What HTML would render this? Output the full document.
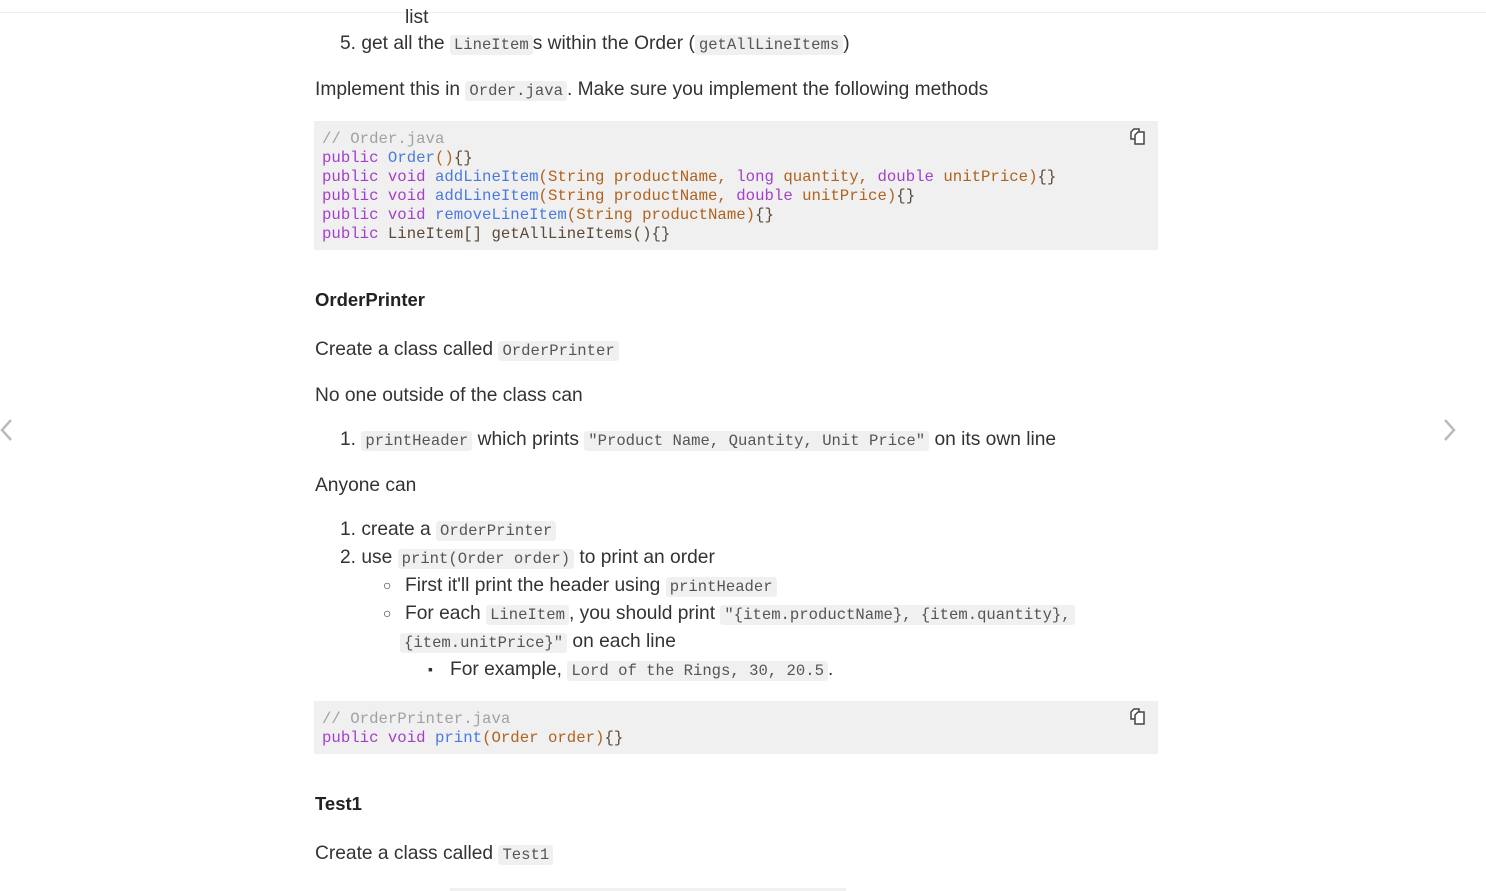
<!DOCTYPE html>
<html><head><meta charset="utf-8"><style>
body{margin:0;width:1486px;height:891px;overflow:hidden;background:#fff;position:relative;font-family:"Liberation Sans",sans-serif;color:#333;font-size:19.2px}
.l{position:absolute;line-height:24px;white-space:nowrap;margin-top:1px}
code{font-family:"Liberation Mono",monospace;font-size:15.6px;background:#f0f0f0;color:#555;padding:1px 4px;border-radius:3px}
.cb{position:absolute;left:314px;width:844px;background:#f0f0f0}
.cl{position:absolute;left:322px;font-family:"Liberation Mono",monospace;font-size:15.7px;line-height:19px;white-space:pre;color:#5c4a3a}
.o{color:#b0621f}
.k{color:#a43fc9}.f{color:#4a7ae0}.c{color:#a0a1a7}
h4{position:absolute;margin:0;font-size:18.5px;font-weight:bold;color:#222;line-height:24px}
.cp{position:absolute;left:1128px;width:18px;height:18px}
.b{position:absolute;font-size:14px}
</style></head><body>
<div style="position:absolute;left:0;top:12px;width:1486px;height:1px;background:#eee"></div>
<div class="l" style="left:405px;top:5px">list</div>
<div class="l" style="left:340px;top:31px">5. get all the <code>LineItem</code>s within the Order (<code>getAllLineItems</code>)</div>
<div class="l" style="left:315px;top:77px">Implement this in <code>Order.java</code>. Make sure you implement the following methods</div>
<div class="cb" style="top:121px;height:129px"></div>
<svg class="cp" style="top:128px" viewBox="0 0 18 18" fill="#fff" stroke="#444" stroke-width="1.5"><path d="M3 4l3-3h5v10H3z"/><path d="M7 7l3-3h6v12H7z"/></svg>
<div class="cl" style="top:130px"><span class="c">// Order.java</span>
<span class="k">public</span> <span class="f">Order</span><span class="o">()</span>{}
<span class="k">public void</span> <span class="f">addLineItem</span><span class="o">(String productName, </span><span class="k">long</span><span class="o"> quantity, </span><span class="k">double</span><span class="o"> unitPrice)</span>{}
<span class="k">public void</span> <span class="f">addLineItem</span><span class="o">(String productName, </span><span class="k">double</span><span class="o"> unitPrice)</span>{}
<span class="k">public void</span> <span class="f">removeLineItem</span><span class="o">(String productName)</span>{}
<span class="k">public</span> LineItem[] getAllLineItems(){}</div>
<h4 style="left:315px;top:288px">OrderPrinter</h4>
<div class="l" style="left:315px;top:337px">Create a class called <code>OrderPrinter</code></div>
<div class="l" style="left:315px;top:383px">No one outside of the class can</div>
<div class="l" style="left:340px;top:427px">1. <code>printHeader</code> which prints <code>"Product Name, Quantity, Unit Price"</code> on its own line</div>
<div class="l" style="left:315px;top:473px">Anyone can</div>
<div class="l" style="left:340px;top:517px">1. create a <code>OrderPrinter</code></div>
<div class="l" style="left:340px;top:545px">2. use <code>print(Order order)</code> to print an order</div>
<div class="l b" style="left:383px;top:572px">○</div>
<div class="l" style="left:405px;top:573px">First it'll print the header using <code>printHeader</code></div>
<div class="l b" style="left:383px;top:600px">○</div>
<div class="l" style="left:405px;top:601px">For each <code>LineItem</code>, you should print <code>"{item.productName}, {item.quantity},</code></div>
<div class="l" style="left:400px;top:629px"><code>{item.unitPrice}"</code> on each line</div>
<div class="l b" style="left:428px;top:656px">▪</div>
<div class="l" style="left:450px;top:657px">For example, <code>Lord of the Rings, 30, 20.5</code>.</div>
<div class="cb" style="top:701px;height:53px"></div>
<svg class="cp" style="top:708px" viewBox="0 0 18 18" fill="#fff" stroke="#444" stroke-width="1.5"><path d="M3 4l3-3h5v10H3z"/><path d="M7 7l3-3h6v12H7z"/></svg>
<div class="cl" style="top:710px"><span class="c">// OrderPrinter.java</span>
<span class="k">public void</span> <span class="f">print</span><span class="o">(Order order)</span>{}</div>
<h4 style="left:315px;top:288px;display:none"></h4>
<h4 style="left:315px;top:792px">Test1</h4>
<div class="l" style="left:315px;top:841px">Create a class called <code>Test1</code></div>
<div style="position:absolute;left:450px;top:888px;width:396px;height:3px;background:#f0f0f0"></div>
<svg style="position:absolute;left:0;top:418px" width="14" height="24" viewBox="0 0 14 24"><path d="M11 2L2 12l9 10" fill="none" stroke="#bbb" stroke-width="2.5"/></svg>
<svg style="position:absolute;left:1442px;top:418px" width="14" height="24" viewBox="0 0 14 24"><path d="M3 2l9 10-9 10" fill="none" stroke="#bbb" stroke-width="2.5"/></svg>
</body></html>
